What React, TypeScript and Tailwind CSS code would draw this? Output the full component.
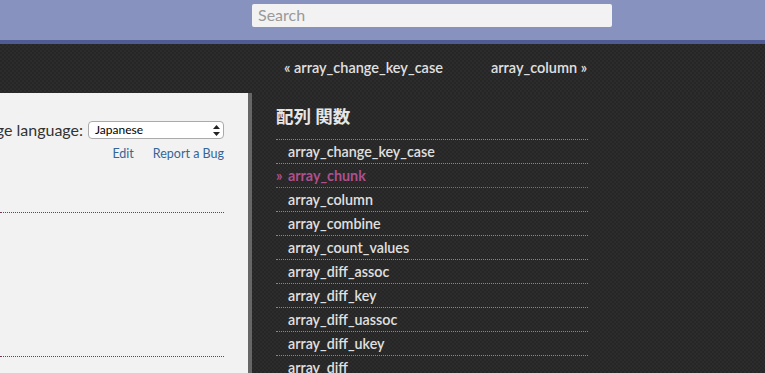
const items = [
  "array_change_key_case",
  "array_chunk",
  "array_column",
  "array_combine",
  "array_count_values",
  "array_diff_assoc",
  "array_diff_key",
  "array_diff_uassoc",
  "array_diff_ukey",
  "array_diff",
];

const dark =
  "bg-[#2a2a2a] bg-[repeating-conic-gradient(#2c2c2c_0_25%,#262626_0_50%)] bg-[length:4px_4px]";

export default function App() {
  return (
    <div className="h-[373px] w-[765px] overflow-hidden font-['Lato','Noto_Sans_CJK_JP',sans-serif]">
      {/* Header */}
      <header className="h-[44px] border-b-4 border-[#4f5b93] bg-[#8892bf] pt-[3px] pl-[252px]">
        <input
          className="h-[23px] w-[360px] rounded-[2px] bg-[#f2f2f2] px-[6px] text-[16px] text-[#333] placeholder:text-[#999] outline-none"
          placeholder="Search"
        />
      </header>

      {/* Prev / next nav */}
      <nav className={`${dark} flex h-[49px] items-center pb-[1px] pl-[284px] text-[14.5px] font-semibold text-[#e0e0e0]`}>
        <span>« array_change_key_case</span>
        <span className="ml-[48px]">array_column »</span>
      </nav>

      <div className={`${dark} flex h-[280px]`}>
        {/* Main content */}
        <main className="w-[252px] shrink-0 overflow-hidden border-r-4 border-[#666] bg-[#f2f2f2] pr-[24px]">
          <div className="mt-[25px] flex items-center justify-end whitespace-nowrap">
            <label className="mr-[5px] text-[16px] text-[#333]">Change language:</label>
            <div className="flex h-[18px] w-[136px] shrink-0 items-center justify-between rounded-[4px] border border-[#aaa] bg-white pl-[6px] pr-[3px] text-[12px] text-black">
              <span>Japanese</span>
              <svg width="7" height="11" viewBox="0 0 7 11">
                <path d="M3.5 0L7 4H0z M3.5 11L0 7h7z" fill="#222" />
              </svg>
            </div>
          </div>
          <div className="mt-[3px] flex justify-end gap-[19px] text-[12.5px] text-[#336699]">
            <a>Edit</a>
            <a>Report a Bug</a>
          </div>
          <div className="mt-[48px] border-b border-dotted border-[#793862]" />
          <div className="mt-[143px] border-b border-dotted border-[#793862]" />
        </main>

        {/* Sidebar */}
        <aside className="ml-[24px] w-[312px]">
          <h2 className="mt-[11px] h-[36px] border-b border-dotted border-[#888] text-[17.5px] font-bold text-[#e6e6e6]">
            配列 関数
          </h2>
          <ul className="text-[14.3px] font-semibold text-[#e0e0e0]">
            {items.map((name) => {
              const active = name === "array_chunk";
              return (
                <li
                  key={name}
                  className={`relative flex h-[24px] items-center border-b border-dotted pl-[12px] ${
                    active ? "border-[#ae508d] font-bold text-[#ae508d]" : "border-[#888]"
                  }`}
                >
                  {active && <span className="absolute left-0">»</span>}
                  <span>{name}</span>
                </li>
              );
            })}
          </ul>
        </aside>
      </div>
    </div>
  );
}
